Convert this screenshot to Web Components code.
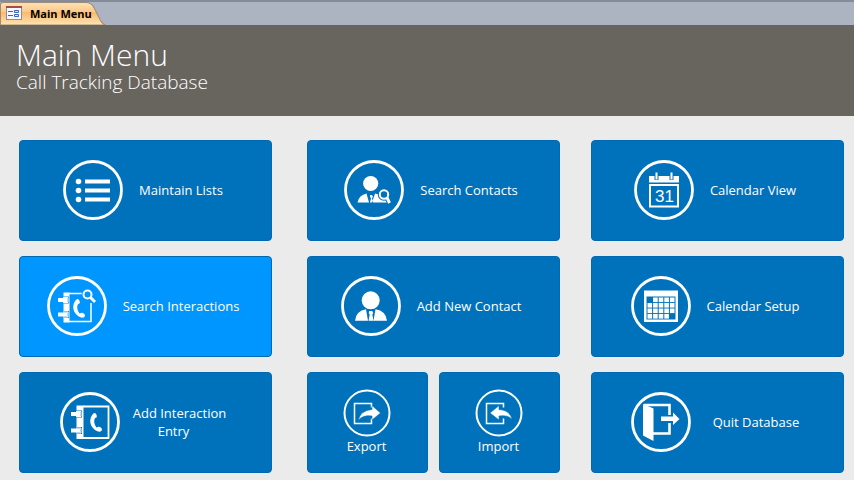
<!DOCTYPE html>
<html lang="en">
<head>
<meta charset="utf-8">
<title>Main Menu</title>
<style>
html, body { margin: 0; min-height: 100%; background: #ebebeb; }
body { font-family: "Open Sans", "Noto Sans", sans-serif; color: #fff; }
</style>
</head>
<body>
<main-menu></main-menu>

<template id="t-tab">
<style>
:host { display: block; background: #abb4c0; border-top: 2px solid #828c9b; }
button { display: flex; align-items: center; gap: 8px; height: 23px; padding: 0 14px 1px 6px; border: 0; position: relative;
  background: none; font: 700 11px "Open Sans", "Noto Sans", sans-serif; color: #000; }
.shape { position: absolute; inset: 0; width: 100%; height: 100%; }
.icon, span { position: relative; }
.icon { width: 16px; height: 14px; }
</style>
<button role="tab" aria-selected="true">
<svg class="shape" viewBox="0 0 105 23" preserveAspectRatio="none" aria-hidden="true">
<defs><linearGradient id="g" x1="0" y1="0" x2="0" y2="1"><stop offset="0" stop-color="#fde3b6"/><stop offset=".4" stop-color="#fcc98a"/><stop offset=".45" stop-color="#fbb96c"/><stop offset="1" stop-color="#fee5b4"/></linearGradient></defs>
<path d="M.5 23V3Q.5.5 3 .5H86Q91 .5 94 7L99 17Q101 22 105 23Z" fill="url(#g)" stroke="#a08b78"/>
</svg>
<svg class="icon" viewBox="0 0 16 14" aria-hidden="true">
<rect x=".5" y=".5" width="15" height="13" fill="#f4f7ff" stroke="#8b89b5"/><path d="M0 1h16" stroke="#a84b44" stroke-width="2"/>
<path d="M2 5.500h5M2 9.500h5" stroke="#4264b4"/><path d="M8.500 4.500h4v2h-4zM8.500 8.500h4v2h-4z" fill="#dce7ff" stroke="#4264b4"/>
</svg>
<span><slot></slot></span>
</button>
</template>

<template id="t-header">
<style>
:host { display: block; background: #68655f; padding: 12px 16px 25px; }
h1, p { margin: 0; font-weight: 300; }
h1 { font-size: 30px; line-height: 36px; }
p { font-size: 19px; line-height: 18px; }
</style>
<h1><slot></slot></h1><p><slot name="subtitle"></slot></p>
</template>

<template id="t-tile">
<style>
:host { display: flex; --gap: 16px; --face: #0072bc; }
:host([active]) { --face: #0096ff; }
button { flex: 1; min-height: 101px; display: flex; align-items: center; justify-content: center; gap: var(--gap);
  padding: 0 5px 2px 0; border: 1px solid #0069b2; border-radius: 4px; background: var(--face);
  color: #fff; font: 13px/18px "Open Sans", "Noto Sans", sans-serif; text-align: center; }
:host([small]) button { flex-direction: column; gap: 0; padding: 0 2px 2px 0; }
</style>
<button><menu-icon></menu-icon><span><slot></slot></span></button>
</template>

<template id="t-main">
<style>
:host { display: block; }
nav { display: grid; padding: 24px 10px 7px 19px; row-gap: 15px;
  grid-template-columns: 1fr 35px 1fr 31px 1fr;
  grid-template-areas: "a . b . c" "d . e . f" "g . h . i"; }
.pair { grid-area: h; display: grid; grid-template-columns: 1fr 1fr; gap: 11px; }
.entry { --gap: 13px; }
.entry span { padding-right: 12px; }
.quit { --gap: 22px; }
</style>
<menu-tab>Main Menu</menu-tab>
<menu-header>Main Menu<span slot="subtitle">Call Tracking Database</span></menu-header>
<nav>
<menu-tile icon="list" style="grid-area:a">Maintain Lists</menu-tile>
<menu-tile icon="searchContact" style="grid-area:b">Search Contacts</menu-tile>
<menu-tile icon="calendar" style="grid-area:c">Calendar View</menu-tile>
<menu-tile icon="searchBook" active style="grid-area:d">Search Interactions</menu-tile>
<menu-tile icon="contact" style="grid-area:e">Add New Contact</menu-tile>
<menu-tile icon="grid" style="grid-area:f">Calendar Setup</menu-tile>
<menu-tile icon="book" class="entry" style="grid-area:g">Add Interaction<br><span>Entry</span></menu-tile>
<div class="pair"><menu-tile icon="export" small>Export</menu-tile><menu-tile icon="import" small>Import</menu-tile></div>
<menu-tile icon="quit" class="quit" style="grid-area:i">Quit Database</menu-tile>
</nav>
</template>

<script>
const phone = '<path d="M-2-9C-8-4-7 6 2 9.500C4.500 10 6 9 6 7.500C6 6 3.500 4 2 5L.5 5.500C-2 2-2.500-1-1-4L.5-4.500C1.500-6 0-9.500-2-9Z" fill="#fff"/>';
const lens = (x, y, r, ex, ey) => `<circle cx="${x}" cy="${y}" r="${r + 2}" fill="var(--face)"/><path d="M${x + r * .7} ${y + r * .7}L${ex} ${ey}" stroke="var(--face)" stroke-width="5"/><circle cx="${x}" cy="${y}" r="${r}" fill="none" stroke="#fff" stroke-width="2"/><path d="M${x + r * .7} ${y + r * .7}L${ex} ${ey}" stroke="#fff" stroke-width="3"/>`;
const rings = (a, b) => [a, b].map(y => `<path d="M16 ${y - 3.500}h6v7h-6z" fill="var(--face)"/><path d="M11 ${y}h9.500" stroke="#fff" stroke-width="4"/><path d="M16 ${y - 2.500}h5v5h-5" fill="none" stroke="#fff"/>`).join('');
const person = (x, y, r) => `<circle cx="${x}" cy="${y}" r="${r}" fill="#fff"/>`;
const icons = {
  list: '<g fill="#fff"><circle cx="15.500" cy="21.500" r="2.800"/><circle cx="15.500" cy="30.500" r="2.800"/><circle cx="15.500" cy="39.500" r="2.800"/><path d="M22 19.500h25v4H22zM22 28.500h25v4H22zM22 37.500h25v4H22z"/></g>',
  searchContact: person(26.700, 23.500, 7.600) + '<path d="M13.500 42.500Q15 35 22.500 33.500L25 42.500ZM31 33.500L28 42.500H44Q43 35 31 33.500ZM26 35h2l1 2-1 1 1 4.500h-3l1-4.500-1-1z" fill="#fff"/>' + lens(40, 34.500, 4.200, 45.500, 43),
  calendar: '<path d="M15 16h30v6.500H15z" fill="#fff"/><path d="M22.500 13v7M37.500 13v7" stroke="var(--face)" stroke-width="4"/><path d="M22.500 12.500v7M37.500 12.500v7" stroke="#fff" stroke-width="2"/><rect x="16" y="25" width="28" height="21.500" fill="none" stroke="#fff" stroke-width="2"/><text x="30.500" y="42" text-anchor="middle" font-family="Liberation Sans, sans-serif" font-size="17" fill="#fff">31</text>',
  searchBook: '<path d="M16.500 16.500h6v30h-6z" fill="#fff"/><path d="M22 17.500h13M22 45.500h22V27" fill="none" stroke="#fff" stroke-width="1.500"/>' + rings(24, 38.500) + `<g transform="translate(32 32)">${phone}</g>` + lens(40.500, 18.500, 4, 48, 26),
  contact: person(29.700, 24.300, 9) + '<path d="M14 44.700Q15 35 25 33.300L27 44.700ZM34.500 33.300Q45 35 46 44.700H32.500ZM28.300 35h3l1 2-1 1.500 1.200 6.200h-5l1.200-6.200-1-1.500z" fill="#fff"/>',
  grid: '<path d="M13 14.500h34V46H13z" fill="#fff"/><path d="M15.500 20.500h29V43.500h-29z" fill="#0072bc"/>' + [0, 1, 2, 3].map(r => [0, 1, 2, 3, 4].map(c => (r + c === 0 || r + c === 7) ? '' : `<rect x="${16.500 + c * 5.600}" y="${21.500 + r * 5.500}" width="4.600" height="4.600" fill="#fff"/>`).join('')).join(''),
  book: '<path d="M16.500 13.500h7v33.500h-7z" fill="#fff"/><path d="M23 14.500h25.500v31.500H23" fill="none" stroke="#fff" stroke-width="1.800"/>' + rings(22, 38.500) + `<g transform="translate(36 30)">${phone}</g>`,
  export: '<path d="M28.500 18.500v-4H11.500v20h17v-5" fill="none" stroke="#fff" stroke-width="1.500"/><path d="M15 31.500Q18 21 29 20.500V16.500L37.500 24L29 31V27Q20 25.500 15 31.500Z" fill="#fff" stroke="var(--face)" stroke-width=".6"/>',
  import: '<path d="M28.500 18.500v-4H11.500v20h17v-5" fill="none" stroke="#fff" stroke-width="1.500"/><path d="M37 30.500Q35 21 24 20.500V16.500L15 24L24 31V27Q33 25.500 37 30.500Z" fill="#fff" stroke="var(--face)" stroke-width=".6"/>',
  quit: '<path d="M13 13h25.500v10M38.500 31v10.500H22" fill="none" stroke="#fff" stroke-width="2.600"/><path d="M12 12L22.500 16.500V49L12 43.500Z" fill="#fff"/><path d="M30 24.500h12V20.500L48.500 27L42 33V29H30Z" fill="#fff"/>'
};
const stamp = (host, id) => host.attachShadow({ mode: 'open' }).append(document.getElementById(id).content.cloneNode(true));

class MenuIcon extends HTMLElement {
  constructor() { super(); this.attachShadow({ mode: 'open' }); }
  static observedAttributes = ['name'];
  attributeChangedCallback() {
    const name = this.getAttribute('name');
    const size = name === 'export' || name === 'import' ? 48 : 60;
    const half = size / 2;
    this.shadowRoot.innerHTML = `<style>:host{display:block;flex:none;width:${size}px;height:${size}px}svg{display:block}</style>
<svg width="${size}" height="${size}" viewBox="0 0 ${size} ${size}" aria-hidden="true"><circle cx="${half}" cy="${half}" r="${half - 1.500}" fill="none" stroke="#fff" stroke-width="${size === 48 ? 2 : 2.800}"/>${icons[name]}</svg>`;
  }
}
class MenuTile extends HTMLElement {
  constructor() { super(); stamp(this, 't-tile'); }
  connectedCallback() { this.shadowRoot.querySelector('menu-icon').setAttribute('name', this.getAttribute('icon')); }
}
class MenuTab extends HTMLElement { constructor() { super(); stamp(this, 't-tab'); } }
class MenuHeader extends HTMLElement { constructor() { super(); stamp(this, 't-header'); } }
class MainMenu extends HTMLElement { constructor() { super(); stamp(this, 't-main'); } }
customElements.define('menu-icon', MenuIcon);
customElements.define('menu-tile', MenuTile);
customElements.define('menu-tab', MenuTab);
customElements.define('menu-header', MenuHeader);
customElements.define('main-menu', MainMenu);
</script>
</body>
</html>
